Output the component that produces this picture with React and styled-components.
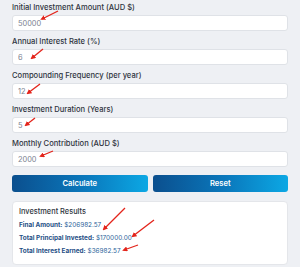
import React, { useState } from "react";
import styled, { createGlobalStyle } from "styled-components";

const GlobalStyle = createGlobalStyle`
  html, body {
    margin: 0;
    padding: 0;
    background: #eef0f4;
    font-family: Inter, "Noto Sans", Arial, sans-serif;
  }
`;

const fields = [
  { label: "Initial Investment Amount (AUD $)", value: "50000" },
  { label: "Annual Interest Rate (%)", value: "6" },
  { label: "Compounding Frequency (per year)", value: "12" },
  { label: "Investment Duration (Years)", value: "5" },
  { label: "Monthly Contribution (AUD $)", value: "2000" },
];

// annotation arrows: [x1, y1, x2, y2]
const arrows = [
  [58, 11, 42, 19],
  [43, 49, 32, 58],
  [40, 84, 28, 93],
  [35, 118, 26, 125],
  [53, 151, 41, 156],
  [125, 208, 104, 229],
  [154, 220, 133, 236],
  [138, 245, 124, 250],
];

function App() {
  const [values, setValues] = useState(fields.map((f) => f.value));

  return (
    <Page>
      <GlobalStyle />
      <Form>
        {fields.map((field, i) => (
          <Field key={field.label}>
            <Label>{field.label}</Label>
            <Input
              value={values[i]}
              onChange={(e) => {
                const next = [...values];
                next[i] = e.target.value;
                setValues(next);
              }}
            />
          </Field>
        ))}
        <Buttons>
          <Button>Calculate</Button>
          <Button>Reset</Button>
        </Buttons>
        <Results>
          <ResultsTitle>Investment Results</ResultsTitle>
          <ResultRow>
            <strong>Final Amount:</strong> $206982.57
          </ResultRow>
          <ResultRow>
            <strong>Total Principal Invested:</strong> $170000.00
          </ResultRow>
          <ResultRow>
            <strong>Total Interest Earned:</strong> $36982.57
          </ResultRow>
        </Results>
      </Form>
      <Annotations width="300" height="267" viewBox="0 0 300 267">
        <defs>
          <marker
            id="head"
            markerWidth="4"
            markerHeight="4"
            refX="2.5"
            refY="2"
            orient="auto"
          >
            <path d="M0,0 L4,2 L0,4 Z" fill="#e3241b" />
          </marker>
        </defs>
        {arrows.map(([x1, y1, x2, y2], i) => (
          <line
            key={i}
            x1={x1}
            y1={y1}
            x2={x2}
            y2={y2}
            stroke="#e3241b"
            strokeWidth="1.3"
            markerEnd="url(#head)"
          />
        ))}
      </Annotations>
    </Page>
  );
}

export default App;

const Page = styled.div`
  position: relative;
  width: 300px;
  height: 267px;
  overflow: hidden;
  background: #eef0f4;
`;

const Form = styled.div`
  display: flex;
  flex-direction: column;
  padding: 3px 12px 0 12px;
  width: 276px;
`;

const Field = styled.div`
  display: flex;
  flex-direction: column;
  gap: 2px;
`;

const Label = styled.label`
  font-size: 7.6px;
  font-weight: 500;
  color: #2e3440;
  line-height: 10px;
`;

const Input = styled.input`
  box-sizing: border-box;
  height: 16px;
  width: 100%;
  border: 1px solid #dfe2e7;
  border-radius: 3px;
  background: #fff;
  padding: 0 5px;
  font-family: Inter, "Noto Sans", Arial, sans-serif;
  font-size: 7.4px;
  color: #7b8190;
  margin: 0 0 6px 0;
  outline: none;
`;

const Buttons = styled.div`
  display: grid;
  grid-template-columns: 1fr 1fr;
  gap: 5px;
  margin-top: 2px;
`;

const Button = styled.button`
  height: 17px;
  border: none;
  border-radius: 3px;
  background: linear-gradient(90deg, #0b4f8e 0%, #0a79bd 55%, #0ca8e4 100%);
  color: #fff;
  font-family: Inter, "Noto Sans", Arial, sans-serif;
  font-size: 7.6px;
  font-weight: 600;
  cursor: pointer;
`;

const Results = styled.div`
  margin-top: 9px;
  background: #fff;
  border: 1px solid #e4e6ea;
  border-radius: 4px;
  padding: 5px 6px 7px;
  height: 64px;
  box-sizing: border-box;
  display: flex;
  flex-direction: column;
  gap: 3px;
`;

const ResultsTitle = styled.div`
  font-size: 7.4px;
  font-weight: 500;
  color: #2e3440;
  line-height: 10px;
`;

const ResultRow = styled.div`
  font-size: 6.4px;
  color: #2b5f9a;
  line-height: 10px;

  strong {
    font-weight: 700;
    color: #1f4f86;
  }
`;

const Annotations = styled.svg`
  position: absolute;
  top: 0;
  left: 0;
  pointer-events: none;
`;
